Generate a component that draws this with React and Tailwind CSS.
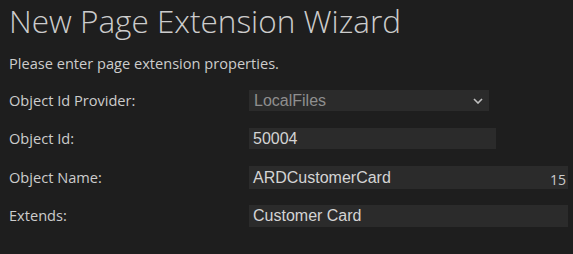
export default function App() {
  return (
    <div className="w-[573px] h-[254px] overflow-hidden bg-[#1e1e1e] text-[#cccccc] font-['Open_Sans',sans-serif] pl-[9px] pr-[5px]">
      <h1 className="text-[31.5px] font-light leading-[40px] pt-[1px] text-[#cccccc]">New Page Extension Wizard</h1>
      <p className="text-[14.6px] mt-[12px] leading-[20px]">Please enter page extension properties.</p>
      <div className="mt-[17px] flex flex-col">
        <div className="flex items-center h-[21px]">
          <label className="w-[240px] text-[14.6px]">Object Id Provider:</label>
          <div className="w-[240px] h-[21px] bg-[#2b2b2b] flex items-center justify-between pl-[5px] pr-[5px]">
            <span className="font-['Liberation_Sans',sans-serif] text-[16px] text-[#8f8f8f]">LocalFiles</span>
            <svg width="10" height="6" viewBox="0 0 10 6" className="mr-[1px]">
              <path d="M1 1 L5 5 L9 1" stroke="#c0c0c0" strokeWidth="1.6" fill="none" />
            </svg>
          </div>
        </div>
        <div className="flex items-center h-[21px] mt-[17px]">
          <label className="w-[240px] text-[14.6px]">Object Id:</label>
          <div className="w-[247px] h-[21px] bg-[#2b2b2b] flex items-center pl-[4px]">
            <span className="font-['Liberation_Sans',sans-serif] text-[16px] text-[#d4d4d4]">50004</span>
          </div>
        </div>
        <div className="flex items-center h-[23px] mt-[17px]">
          <label className="w-[240px] text-[14.6px]">Object Name:</label>
          <div className="flex-1 h-[23px] bg-[#2b2b2b] flex items-center justify-between pl-[4px] pr-[2px]">
            <span className="font-['Liberation_Sans',sans-serif] text-[16px] text-[#d4d4d4]">ARDCustomerCard</span>
            <span className="text-[14px] text-[#cccccc] mt-[4px]">15</span>
          </div>
        </div>
        <div className="flex items-center h-[22px] mt-[16px]">
          <label className="w-[240px] text-[14.6px]">Extends:</label>
          <div className="flex-1 h-[22px] bg-[#2b2b2b] flex items-center pl-[4px]">
            <span className="font-['Liberation_Sans',sans-serif] text-[16px] text-[#d4d4d4]">Customer Card</span>
          </div>
        </div>
      </div>
    </div>
  );
}
